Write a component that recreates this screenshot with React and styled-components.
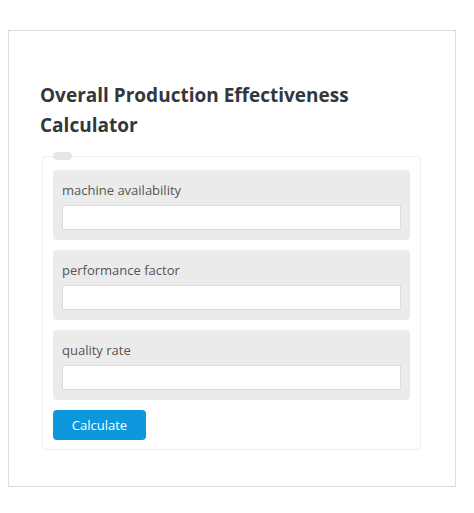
import React from "react";
import styled, { createGlobalStyle } from "styled-components";

const Global = createGlobalStyle`
  html, body { margin: 0; padding: 0; background: #fff; }
  body { font-family: "Open Sans", "Noto Sans", sans-serif; }
  * { box-sizing: border-box; }
`;

const Page = styled.div`
  padding: 30px 0 0 8px;
`;

const Card = styled.div`
  width: 448px;
  height: 457px;
  border: 1px solid #dcdcdc;
  padding: 49px 34px 0 31px;
`;

const Title = styled.h2`
  margin: 0 0 12px 0;
  font-size: 19px;
  line-height: 30px;
  font-weight: 700;
  color: #32373c;
`;

const Form = styled.fieldset`
  margin: 0 0 0 2px;
  border: 1px solid #eeeeee;
  border-radius: 4px;
  padding: 10px 10px 9px 10px;
  display: flex;
  flex-direction: column;
  gap: 10px;
`;

const Legend = styled.legend`
  width: 19px;
  height: 8px;
  padding: 0;
  background: #e6e6e6;
  border-radius: 4px;
`;

const Field = styled.div`
  background: #ebebeb;
  border-radius: 4px;
  padding: 10px 9px;
  display: flex;
  flex-direction: column;
  gap: 5px;
`;

const Label = styled.label`
  font-size: 13px;
  line-height: 20px;
  color: #555;
`;

const Input = styled.input`
  height: 25px;
  width: 100%;
  border: 1px solid #dddddd;
  background: #fff;
  outline: none;
`;

const Button = styled.button`
  align-self: flex-start;
  width: 93px;
  height: 30px;
  border: none;
  border-radius: 4px;
  background: #0d97dc;
  color: #fff;
  font-family: "Open Sans", "Noto Sans", sans-serif;
  font-size: 13px;
  cursor: pointer;
`;

const fields = ["machine availability", "performance factor", "quality rate"];

export default function App() {
  return (
    <>
      <Global />
      <Page>
        <Card>
          <Title>Overall Production Effectiveness Calculator</Title>
          <Form>
            <Legend />
            {fields.map((f) => (
              <Field key={f}>
                <Label>{f}</Label>
                <Input type="text" />
              </Field>
            ))}
            <Button>Calculate</Button>
          </Form>
        </Card>
      </Page>
    </>
  );
}
